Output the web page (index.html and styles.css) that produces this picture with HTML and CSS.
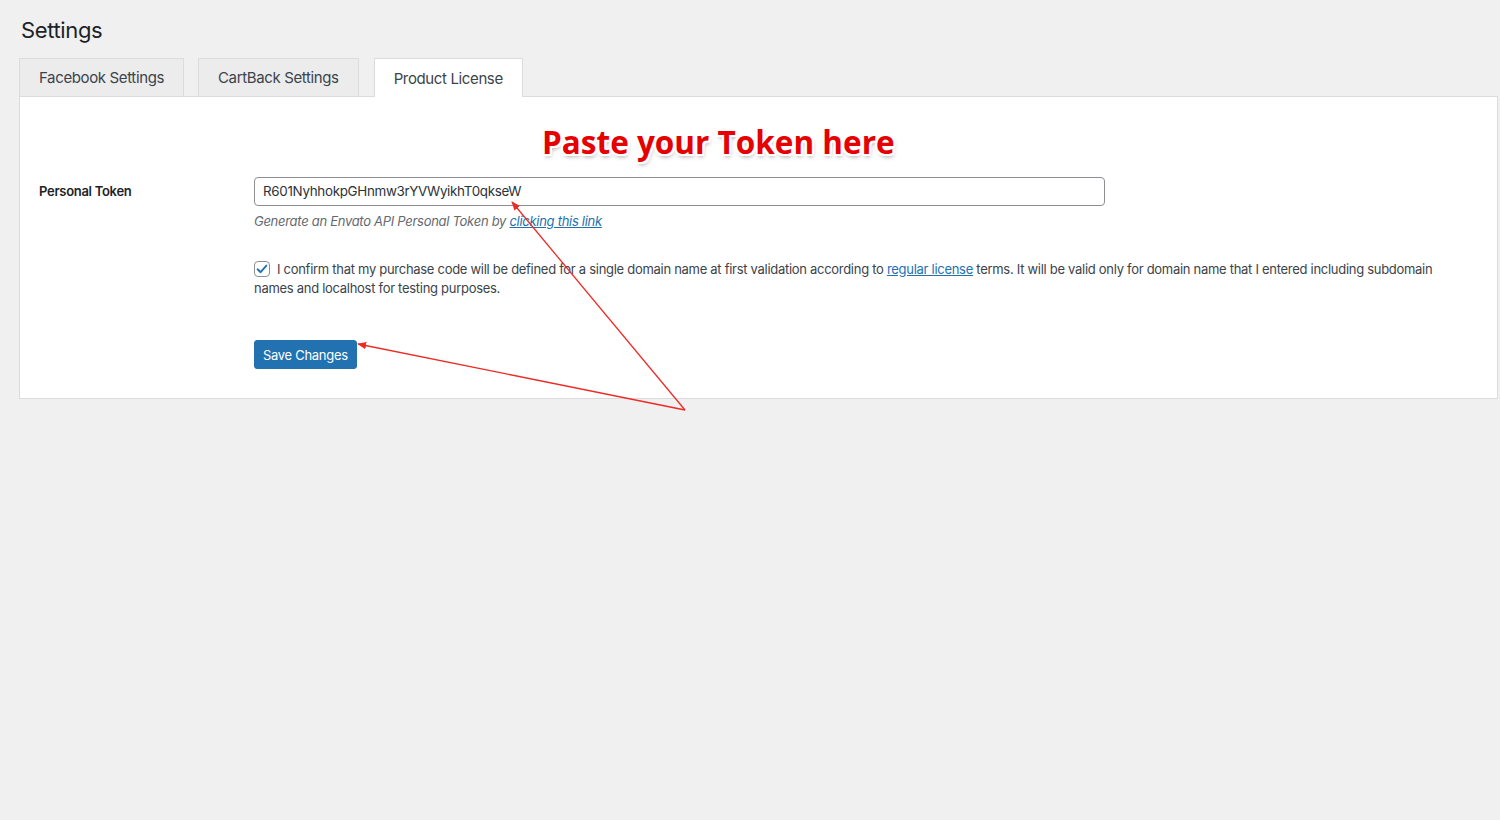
FILE: index.html
```html
<!DOCTYPE html>
<html>
<head>
<meta charset="utf-8">
<title>Settings</title>
<link rel="stylesheet" href="styles.css">
</head>
<body>
<div class="wrap">
  <h1 class="page-title">Settings</h1>
  <nav class="tabs">
    <a class="tab">Facebook Settings</a>
    <a class="tab">CartBack Settings</a>
    <a class="tab active">Product License</a>
  </nav>
  <section class="panel">
    <div class="callout">Paste your Token here</div>
    <div class="form-row token-row">
      <div class="label">Personal Token</div>
      <div class="field">
        <div class="input">R601NyhhokpGHnmw3rYVWyikhT0qkseW</div>
        <p class="desc">Generate an Envato API Personal Token by <a class="link">clicking this link</a></p>
      </div>
    </div>
    <div class="form-row">
      <div class="label"></div>
      <div class="field">
        <p class="confirm"><span class="checkbox"><svg viewBox="0 0 16 16" width="16" height="16"><path d="M3.6 8.3 L6.6 11.2 L12.4 4.6" fill="none" stroke="#2271b1" stroke-width="1.9" stroke-linecap="round" stroke-linejoin="round"/></svg></span>I confirm that my purchase code will be defined for a single domain name at first validation according to <a class="link">regular license</a> terms. It will be valid only for domain name that I entered including subdomain names and localhost for testing purposes.</p>
        <button class="btn">Save Changes</button>
      </div>
    </div>
  </section>
</div>
<svg class="annot" width="1500" height="820" viewBox="0 0 1500 820">
  <defs>
    <marker id="ah" viewBox="0 0 10 10" refX="9" refY="5" markerWidth="7" markerHeight="7" orient="auto">
      <path d="M0 1 L10 5 L0 9 z" fill="#ee2a24"/>
    </marker>
  </defs>
  <line x1="685" y1="410" x2="512" y2="202" stroke="#ee2a24" stroke-width="1.3" marker-end="url(#ah)"/>
  <line x1="685" y1="410" x2="358" y2="344" stroke="#ee2a24" stroke-width="1.3" marker-end="url(#ah)"/>
</svg>
</body>
</html>
```
FILE: styles.css
```css
html, body {
  margin: 0;
  padding: 0;
}
body {
  background: #f0f0f1;
  font-family: Inter, "Liberation Sans", Arial, sans-serif;
  letter-spacing: -0.023em;
  color: #3c434a;
  width: 1500px;
  height: 820px;
  overflow: hidden;
  position: relative;
}
.wrap {
  padding: 16px 2px 0 19px;
}
.page-title {
  margin: 0 0 0 2px;
  font-size: 22px;
  font-weight: 400;
  line-height: 29px;
  color: #1d2327;
}
.tabs {
  display: flex;
  gap: 14px;
  margin-top: 13px;
  height: 38px;
  position: relative;
  z-index: 1;
}
.tab {
  box-sizing: border-box;
  height: 38px;
  padding: 0 19px;
  display: flex;
  align-items: center;
  border: 1px solid #dcdcde;
  border-bottom: none;
  background: #ececed;
  font-size: 15px;
  color: #3c434a;
}
.tab.active {
  background: #fff;
  height: 39px;
  margin-left: 1px;
}
.panel {
  background: #fff;
  border: 1px solid #dcdcde;
  height: 301px;
  padding: 0 19px;
}
.callout {
  margin: 25px 0 0 503px;
  font-family: "Open Sans", sans-serif;
  font-weight: 700;
  font-size: 31.5px;
  letter-spacing: 0;
  line-height: 40px;
  color: #e60000;
  text-shadow:
    -2px 0 0 #fff, 2px 0 0 #fff, 0 -2px 0 #fff, 0 2px 0 #fff,
    -2px -2px 0 #fff, 2px -2px 0 #fff, -2px 2px 0 #fff, 2px 2px 0 #fff,
    1px 3px 4px rgba(0, 0, 0, 0.35);
}
.form-row {
  display: grid;
  grid-template-columns: 215px 1fr;
  letter-spacing: -0.018em;
}
.token-row {
  margin-top: 15px;
}
.label {
  font-size: 13px;
  font-weight: 600;
  color: #1d2327;
  line-height: 28px;
}
.field {
  padding-right: 24px;
}
.input {
  box-sizing: border-box;
  width: 851px;
  height: 29px;
  border: 1px solid #8c8f94;
  border-radius: 4px;
  padding: 0 8px;
  font-size: 13.4px;
  line-height: 27px;
  letter-spacing: -0.023em;
  color: #2c3338;
}
.desc {
  margin: 6px 0 0 0;
  font-size: 13px;
  line-height: 18px;
  font-style: italic;
  color: #646970;
}
.link {
  color: #2271b1;
  text-decoration: underline;
}
.confirm {
  margin: 30px 0 0 0;
  font-size: 13px;
  line-height: 19px;
  color: #3c434a;
}
.checkbox {
  box-sizing: border-box;
  display: inline-block;
  width: 16px;
  height: 16px;
  border: 1px solid #8c8f94;
  border-radius: 4px;
  vertical-align: -3px;
  margin-right: 7px;
  position: relative;
}
.checkbox svg {
  position: absolute;
  left: -1px;
  top: -1px;
}
.btn {
  display: block;
  margin-top: 42px;
  height: 29px;
  padding: 0 8px;
  border: 1px solid #2271b1;
  border-radius: 3px;
  background: #2271b1;
  color: #fff;
  font-family: Inter, "Liberation Sans", Arial, sans-serif;
  letter-spacing: -0.023em;
  font-size: 13px;
}
.annot {
  position: absolute;
  left: 0;
  top: 0;
  pointer-events: none;
}
```
